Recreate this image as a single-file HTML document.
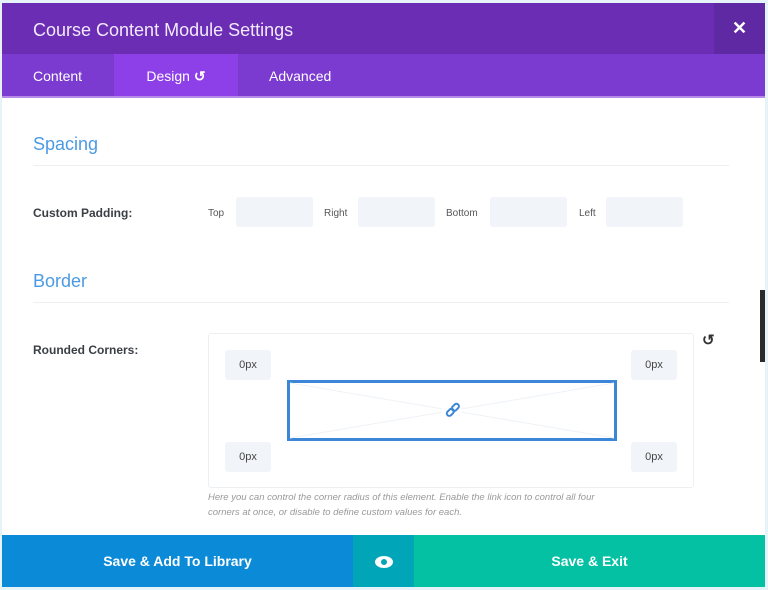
<!DOCTYPE html>
<html><head><meta charset="utf-8"><style>
*{box-sizing:border-box;margin:0;padding:0}
body{width:768px;height:590px;background:#e6f4fa;font-family:"Liberation Sans",sans-serif;position:relative;overflow:hidden}
.m{position:absolute;left:2px;top:3px;width:763px;height:584px;background:#fff;overflow:hidden}
.hd{position:absolute;left:0;top:0;width:763px;height:51px;background:#6a2db4}
.hd h1{position:absolute;left:31px;top:17px;font-size:18px;font-weight:normal;color:#f2eafc}
.x{position:absolute;right:0;top:0;width:51px;height:51px;background:#5f29a3;color:#fff;font-size:18px;font-weight:bold;text-align:center;line-height:51px}
.tabs{position:absolute;left:0;top:51px;width:763px;height:44px;background:#7b3bd0;border-bottom:2px solid #b68ae6}
.tab{position:absolute;top:0;height:42px;line-height:44px;color:#fff;font-size:14px}
.t2{left:112px;width:124px;background:#8d40e8;text-align:center}
.lbl{position:absolute;font-size:12px;font-weight:bold;color:#3a3f46}
.sec{position:absolute;left:31px;font-size:18px;color:#4c9ae2}
.hr{position:absolute;left:31px;width:696px;height:1px;background:#edf0f3}
.sm{position:absolute;font-size:10px;color:#555;top:205px}
.in{position:absolute;top:194px;width:77px;height:30px;background:#f1f4f8;border-radius:3px}
.box{position:absolute;left:206px;top:330px;width:486px;height:155px;border:1px solid #edf0f3;border-radius:3px}
.px{position:absolute;width:46px;height:30px;background:#f1f4f8;border-radius:3px;font-size:11px;color:#444;text-align:center;line-height:30px}
.help{position:absolute;left:206px;top:487px;font-size:9.5px;font-style:italic;color:#999;line-height:15px;width:420px}
.ft{position:absolute;left:0;top:532px;height:52px;color:#fff;font-weight:bold;font-size:14px;text-align:center;line-height:52px}
</style></head><body><div class="m">
<div class="hd"><h1>Course Content Module Settings</h1><div class="x">✕</div></div>
<div class="tabs"><div class="tab" style="left:31px">Content</div><div class="tab t2">Design <span style="font-weight:bold">↺</span></div><div class="tab" style="left:267px">Advanced</div></div>
<div class="sec" style="top:131px">Spacing</div><div class="hr" style="top:162px"></div>
<div class="lbl" style="left:31px;top:203px">Custom Padding:</div>
<div class="sm" style="left:206px">Top</div><div class="in" style="left:234px"></div>
<div class="sm" style="left:322px">Right</div><div class="in" style="left:356px"></div>
<div class="sm" style="left:444px">Bottom</div><div class="in" style="left:488px"></div>
<div class="sm" style="left:577px">Left</div><div class="in" style="left:604px"></div>
<div class="sec" style="top:268px">Border</div><div class="hr" style="top:299px"></div>
<div class="lbl" style="left:31px;top:340px">Rounded Corners:</div>
<div style="position:absolute;left:700px;top:328px;font-size:15px;font-weight:bold;color:#333">↺</div>
<div style="position:absolute;left:758px;top:287px;width:5px;height:72px;background:#2b2b2b"></div>
<div class="box"></div>
<div class="px" style="left:223px;top:347px">0px</div><div class="px" style="left:629px;top:347px">0px</div>
<div class="px" style="left:223px;top:439px">0px</div><div class="px" style="left:629px;top:439px">0px</div>
<svg style="position:absolute;left:285px;top:377px" width="330" height="61"><rect x="1.5" y="1.5" width="327" height="58" fill="#fff" stroke="#3b86d6" stroke-width="3"/><line x1="3" y1="3" x2="327" y2="58" stroke="#eef2f6"/><line x1="327" y1="3" x2="3" y2="58" stroke="#eef2f6"/><rect x="155" y="22" width="20" height="16" fill="#fff"/><g fill="none" stroke="#3b86d6" stroke-width="2"><rect x="159" y="30" width="8" height="5" rx="2.5" transform="rotate(-45 163 32)"/><rect x="164" y="25" width="8" height="5" rx="2.5" transform="rotate(-45 168 27)"/></g></svg>
<div class="help">Here you can control the corner radius of this element. Enable the link icon to control all four corners at once, or disable to define custom values for each.</div>
<div class="ft" style="width:351px;background:#0b8ad8">Save &amp; Add To Library</div>
<div class="ft" style="left:351px;width:61px;background:#01a5b8"><svg width="18" height="12" viewBox="0 0 18 12" style="vertical-align:middle"><ellipse cx="9" cy="6" rx="9" ry="6" fill="#fff"/><circle cx="9" cy="6" r="3" fill="#01a5b8"/></svg></div>
<div class="ft" style="left:412px;width:351px;background:#05c1a4">Save &amp; Exit</div>
</div></body></html>
